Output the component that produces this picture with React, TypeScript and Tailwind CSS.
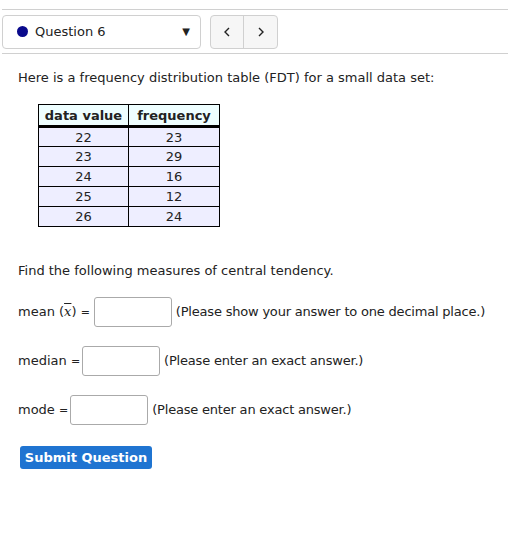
import React from "react";

const rows = [
  ["22", "23"],
  ["23", "29"],
  ["24", "16"],
  ["25", "12"],
  ["26", "24"],
];

export default function App() {
  return (
    <div className="w-[508px] h-[539px] bg-white text-[13px] leading-[20px] text-[#222] overflow-hidden" style={{ fontFamily: "'DejaVu Sans', sans-serif" }}>
      <div className="pt-[9px]">
        <div className="ml-[2px] border-t border-b border-[#d0d0d0] h-[45px] flex items-center gap-[9px]">
          <div className="w-[199px] h-[34px] border border-[#d0d0d0] rounded-[4px] flex items-center pl-[14px] pr-[10px]">
            <span className="w-[11px] h-[11px] rounded-full bg-[#0a0a8c] mr-[7px]" />
            <span className="flex-1">Question 6</span>
            <span className="text-[10px]">▼</span>
          </div>
          <div className="h-[34px] flex border border-[#d0d0d0] rounded-[4px] bg-[#f6f6f6]">
            <div className="w-[33px] flex items-center justify-center border-r border-[#d0d0d0]">
              <svg width="8" height="10" viewBox="0 0 8 10"><path d="M6 1 L2 5 L6 9" fill="none" stroke="#222" strokeWidth="1.4" /></svg>
            </div>
            <div className="w-[33px] flex items-center justify-center">
              <svg width="8" height="10" viewBox="0 0 8 10"><path d="M2 1 L6 5 L2 9" fill="none" stroke="#222" strokeWidth="1.4" /></svg>
            </div>
          </div>
        </div>
      </div>
      <div className="px-[18px]">
        <p className="mt-[14px]">Here is a frequency distribution table (FDT) for a small data set:</p>
        <table className="mt-[16px] ml-[20px] border-collapse border border-black">
          <thead>
            <tr className="bg-[#eefeff] border-b-[3px] border-black">
              <th className="w-[90px] h-[22px] border border-black font-bold px-1 leading-none">data value</th>
              <th className="w-[91px] border border-black font-bold px-1 leading-none">frequency</th>
            </tr>
          </thead>
          <tbody>
            {rows.map((r, i) => (
              <tr key={i} className="bg-[#eeeeff]">
                <td className="h-[20px] border border-black text-center leading-none">{r[0]}</td>
                <td className="border border-black text-center leading-none">{r[1]}</td>
              </tr>
            ))}
          </tbody>
        </table>
        <p className="mt-[34px]">Find the following measures of central tendency.</p>
        <div className="mt-[16px] flex items-center h-[30px] whitespace-nowrap">
          <span className="shrink-0">mean (<span className="italic" style={{ fontFamily: "'DejaVu Serif', serif", textDecoration: "overline" }}>x</span>) <span className="text-[11px]">=</span></span>
          <span className="shrink-0 ml-[4px] w-[78px] h-[30px] border border-[#aaa] rounded-[3px]" />
          <span className="shrink-0 ml-[4px] tracking-[-0.2px]">(Please show your answer to one decimal place.)</span>
        </div>
        <div className="mt-[19px] flex items-center h-[30px] whitespace-nowrap">
          <span className="shrink-0">median <span className="text-[11px]">=</span></span>
          <span className="shrink-0 ml-[2px] w-[78px] h-[30px] border border-[#aaa] rounded-[3px]" />
          <span className="shrink-0 ml-[4px] tracking-[-0.2px]">(Please enter an exact answer.)</span>
        </div>
        <div className="mt-[19px] flex items-center h-[30px] whitespace-nowrap">
          <span className="shrink-0">mode <span className="text-[11px]">=</span></span>
          <span className="shrink-0 ml-[2px] w-[78px] h-[30px] border border-[#aaa] rounded-[3px]" />
          <span className="shrink-0 ml-[4px] tracking-[-0.2px]">(Please enter an exact answer.)</span>
        </div>
        <button className="block mt-[21px] ml-[2px] w-[132px] h-[23px] bg-[#1f74d1] rounded-[3px] text-white font-bold text-[13px] leading-none">Submit Question</button>
      </div>
    </div>
  );
}
